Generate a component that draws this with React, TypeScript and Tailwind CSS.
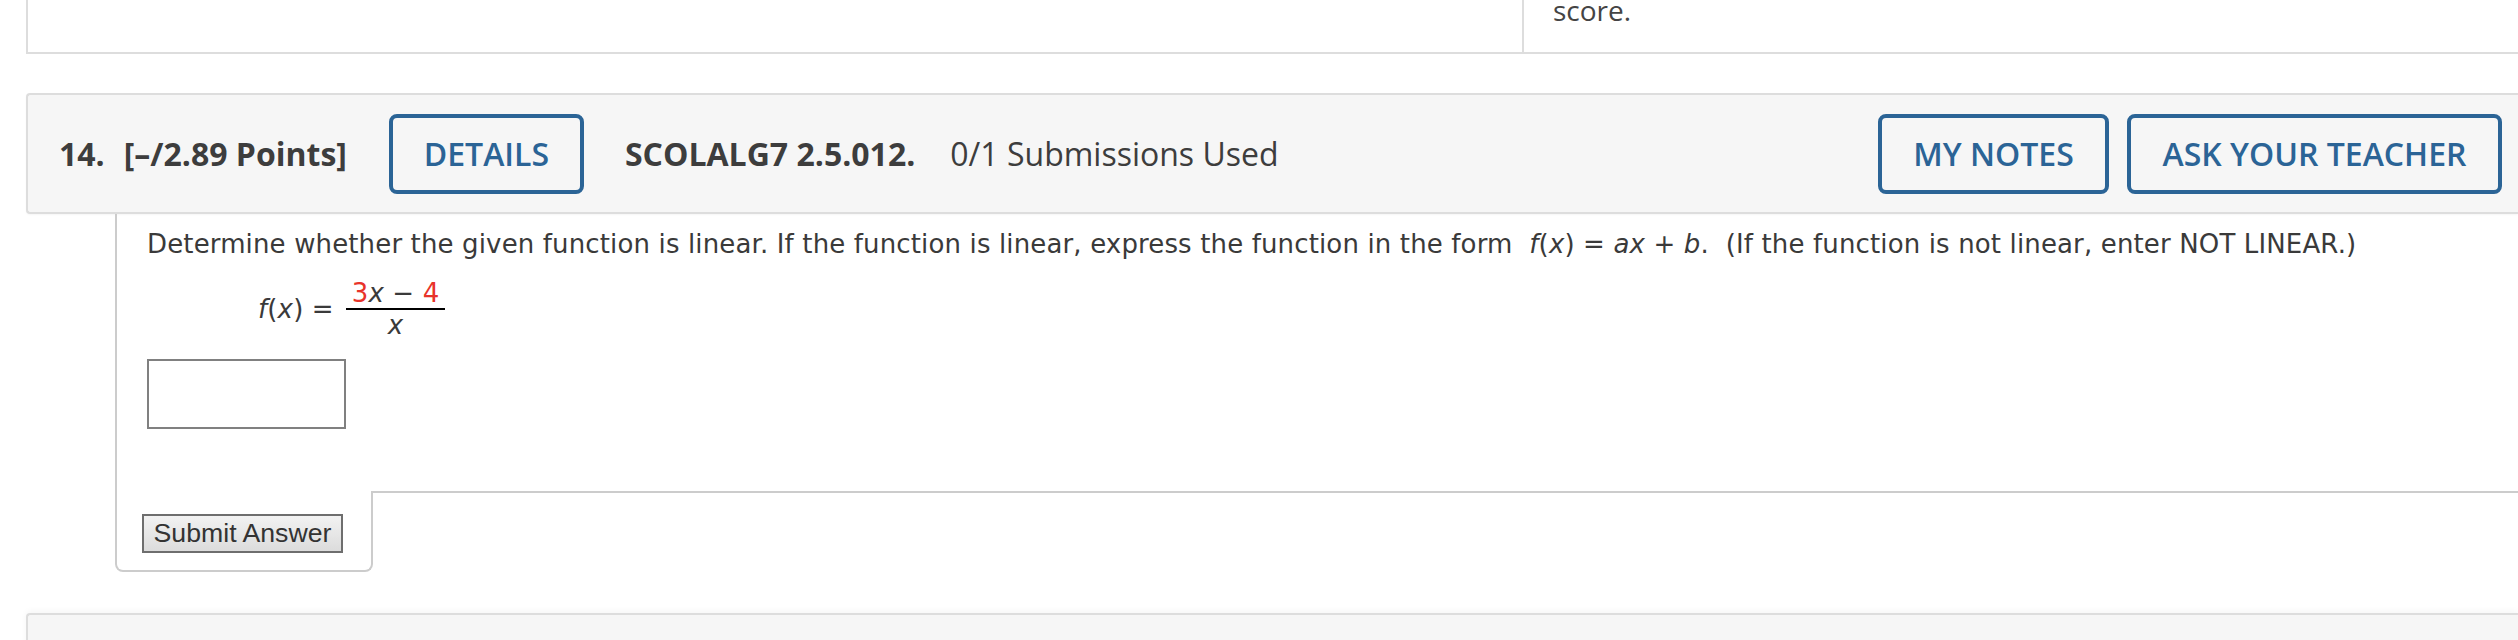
export default function App() {
  return (
    <div className="h-[640px] w-full overflow-hidden bg-white font-['Open_Sans',sans-serif] text-[#3d3d3d]">
      {/* previous question, tail end */}
      <div className="ml-[26px] flex h-[54px] border-b-2 border-l-2 border-[#dddddd]">
        <div className="w-[1496px] border-r-2 border-[#dddddd]" />
        <div className="pl-[29px]">
          <span className="-mt-[9px] block text-[28px] leading-[38px] text-[#444]">score.</span>
        </div>
      </div>

      {/* question header */}
      <div className="mt-[39px] ml-[26px] flex h-[121px] items-center rounded-l-[4px] border-y-2 border-l-2 border-[#dddddd] bg-[#f6f6f6] pl-[31px] shadow-[0_1px_2px_rgba(0,0,0,0.04)]">
        <span className="text-[32px] font-bold">14.</span>
        <span className="ml-[19px] text-[32px] font-bold">[–/2.89 Points]</span>
        <button className="ml-[42px] flex h-[80px] w-[195px] items-center justify-center rounded-[8px] border-4 border-[#2b6496] text-[32px] font-semibold text-[#2b6496]">
          DETAILS
        </button>
        <span className="ml-[41px] text-[32px] font-bold">SCOLALG7 2.5.012.</span>
        <span className="ml-[35px] text-[32px]">0/1 Submissions Used</span>
        <div className="ml-auto mr-[16px] flex gap-[18px]">
          <button className="flex h-[80px] w-[231px] items-center justify-center rounded-[8px] border-4 border-[#2b6496] text-[32px] font-semibold text-[#2b6496]">
            MY NOTES
          </button>
          <button className="flex h-[80px] w-[375px] items-center justify-center rounded-[8px] border-4 border-[#2b6496] text-[32px] font-semibold text-[#2b6496]">
            ASK YOUR TEACHER
          </button>
        </div>
      </div>

      {/* question body */}
      <div className="ml-[115px] font-['DejaVu_Sans',Verdana,sans-serif] text-[26px] tracking-[0.14px] text-[#3a3a3a]">
        <div className="h-[277px] border-l-2 border-[#cccccc] pt-[12px] pl-[30px]">
          <p className="leading-[36px]">
            Determine whether the given function is linear. If the function is linear, express the function in the form&nbsp; <i>f</i>(<i>x</i>) = <i>ax</i> + <i>b</i>.&nbsp; (If the function is not linear, enter NOT LINEAR.)
          </p>
          <div className="mt-[16px] ml-[111px] flex items-center">
            <span className="leading-[30px]">
              <i>f</i>(<i>x</i>) =
            </span>
            <div className="ml-[12px] flex flex-col items-center">
              <span className="px-[6px] leading-[30px]">
                <span className="text-[#e8332a]">3</span>
                <i>x</i> − <span className="text-[#e8332a]">4</span>
              </span>
              <div className="h-[2px] w-full bg-black" />
              <span className="leading-[30px]">
                <i>x</i>
              </span>
            </div>
          </div>
          <input type="text" className="mt-[19px] block h-[70px] w-[199px] border-2 border-[#808080] bg-white outline-none" />
        </div>
        <div className="flex">
          <div className="h-[81px] w-[258px] rounded-b-[8px] border-x-2 border-b-2 border-[#cccccc] pt-[23px] pl-[25px]">
            <button className="h-[39px] w-[201px] border-2 border-[#6e6e6e] bg-gradient-to-b from-[#f2f2f2] to-[#dcdcdc] font-['Liberation_Sans',Arial,sans-serif] text-[26.67px] leading-none tracking-normal text-[#333]">
              Submit Answer
            </button>
          </div>
          <div className="flex-1 border-t-2 border-[#cccccc]" />
        </div>
      </div>

      {/* next question header */}
      <div className="mt-[41px] ml-[26px] h-[40px] rounded-tl-[4px] border-t-2 border-l-2 border-[#dddddd] bg-[#f6f6f6] shadow-[0_-2px_6px_rgba(0,0,0,0.04)]" />
    </div>
  );
}
